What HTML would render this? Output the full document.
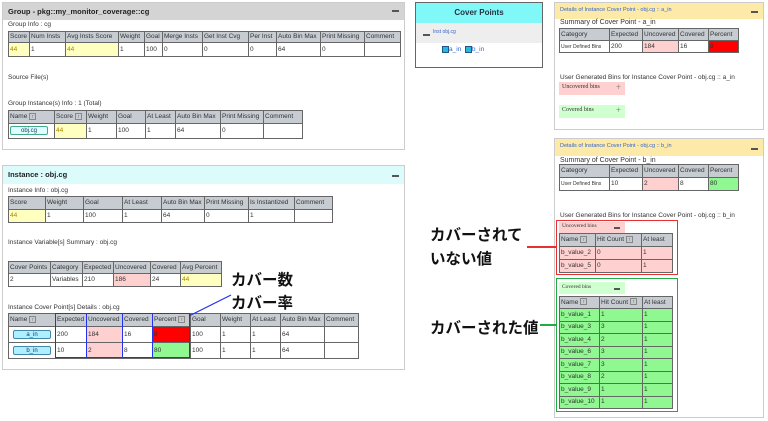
<!DOCTYPE html>
<html><head><meta charset="utf-8"><style>
*{margin:0;padding:0;box-sizing:border-box}
body{width:768px;height:421px;background:#fff;position:relative;overflow:hidden;font-family:"Liberation Sans","Noto Sans CJK JP",sans-serif;color:#333;font-size:7px}
.a{position:absolute}
.panel{position:absolute;border:1px solid #ccc;background:#fff}
.hd{position:absolute;left:0;right:0;top:0;font-weight:bold;font-size:7.5px;padding:4px 5px;color:#222}
.mn{position:absolute;right:5px;top:7px;width:7px;height:2px;background:#555}
table{position:absolute;border-collapse:collapse;table-layout:fixed;font-size:6.5px}
td{border:1px solid #666;padding:0 1px;white-space:nowrap;overflow:hidden;line-height:10px}
tr.h td{background:#c6ccd2;color:#333}
.y{background:#ffffc0;color:#aa8800}
.p{background:#ffd0d0}
.r{background:#f00}
.g{background:#90f890}
.btn{display:inline-block;width:38px;height:9px;border:1px solid #4a8;border-radius:2px;background:#dff;text-align:center;line-height:8px;font-size:6px;color:#236}
.btn2{display:inline-block;width:38px;height:9px;border:1px solid #48a;border-radius:2px;background:#aef0ff;text-align:center;line-height:8px;font-size:6px;color:#236}
.jp{position:absolute;font-weight:bold;font-size:15.5px;color:#111;font-family:"Liberation Sans","Noto Sans CJK JP",sans-serif}
.sm{position:absolute;font-size:6.5px;color:#333}
.so{display:inline-block;width:7px;height:7px;border:1px solid #888;font-size:5px;line-height:6px;text-align:center;vertical-align:middle;margin-left:2px}
.cb{display:inline-block;width:7px;height:7px;background:#2bd;border:1px solid #258;vertical-align:middle}
</style></head><body>

<div class="panel" style="left:2px;top:2px;width:403px;height:148px">
<div class="hd" style="background:#d4d4d4;height:17px">Group - pkg::my_monitor_coverage::cg</div><div class="mn"></div></div>
<div class="sm" style="left:8px;top:21px">Group Info : cg</div>
<table style="left:8px;top:31px;width:392px">
<colgroup><col style="width:21px"><col style="width:36px"><col style="width:53px"><col style="width:26px"><col style="width:18px"><col style="width:40px"><col style="width:46px"><col style="width:28px"><col style="width:44px"><col style="width:44px"><col style="width:36px"></colgroup>
<tr class="h"><td>Score</td><td>Num Insts</td><td>Avg Insts Score</td><td>Weight</td><td>Goal</td><td>Merge Insts</td><td>Get Inst Cvg</td><td>Per Inst</td><td>Auto Bin Max</td><td>Print Missing</td><td>Comment</td></tr>
<tr style="height:14px"><td class="y">44</td><td>1</td><td class="y">44</td><td>1</td><td>100</td><td>0</td><td>0</td><td>0</td><td>64</td><td>0</td><td></td></tr></table>
<div class="sm" style="left:8px;top:74px">Source File(s)</div>
<div class="sm" style="left:8px;top:100px">Group Instance(s) Info : 1 (Total)</div>
<table style="left:8px;top:110px;width:294px">
<colgroup><col style="width:46px"><col style="width:32px"><col style="width:30px"><col style="width:29px"><col style="width:30px"><col style="width:45px"><col style="width:43px"><col style="width:39px"></colgroup>
<tr class="h" style="height:13px"><td>Name<span class="so">↑</span></td><td>Score<span class="so">↑</span></td><td>Weight</td><td>Goal</td><td>At Least</td><td>Auto Bin Max</td><td>Print Missing</td><td>Comment</td></tr>
<tr style="height:15px"><td><span class="btn">obj.cg</span></td><td class="y">44</td><td>1</td><td>100</td><td>1</td><td>64</td><td>0</td><td></td></tr></table>

<div class="panel" style="left:2px;top:165px;width:403px;height:205px">
<div class="hd" style="background:#dcfcfc;height:18px">Instance : obj.cg</div><div class="mn" style="top:9px"></div></div>
<div class="sm" style="left:8px;top:187px">Instance Info : obj.cg</div>
<table style="left:8px;top:196px;width:324px">
<colgroup><col style="width:37px"><col style="width:38px"><col style="width:39px"><col style="width:39px"><col style="width:43px"><col style="width:44px"><col style="width:46px"><col style="width:38px"></colgroup>
<tr class="h" style="height:13px"><td>Score</td><td>Weight</td><td>Goal</td><td>At Least</td><td>Auto Bin Max</td><td>Print Missing</td><td>Is Instantized</td><td>Comment</td></tr>
<tr style="height:13px"><td class="y">44</td><td>1</td><td>100</td><td>1</td><td>64</td><td>0</td><td>1</td><td></td></tr></table>
<div class="sm" style="left:8px;top:239px">Instance Variable[s] Summary : obj.cg</div>
<table style="left:8px;top:261px;width:213px">
<colgroup><col style="width:42px"><col style="width:32px"><col style="width:31px"><col style="width:37px"><col style="width:30px"><col style="width:41px"></colgroup>
<tr class="h" style="height:12px"><td>Cover Points</td><td>Category</td><td>Expected</td><td>Uncovered</td><td>Covered</td><td>Avg Percent</td></tr>
<tr style="height:13px"><td>2</td><td>Variables</td><td>210</td><td class="p">186</td><td>24</td><td class="y">44</td></tr></table>
<div class="jp" style="left:231px;top:268px">カバー数</div>
<div class="jp" style="left:231px;top:291px">カバー率</div>
<div class="sm" style="left:8px;top:304px">Instance Cover Point[s] Details : obj.cg</div>
<table style="left:8px;top:313px;width:350px">
<colgroup><col style="width:47px"><col style="width:31px"><col style="width:36px"><col style="width:30px"><col style="width:38px"><col style="width:30px"><col style="width:30px"><col style="width:30px"><col style="width:44px"><col style="width:34px"></colgroup>
<tr class="h" style="height:13px"><td>Name<span class="so">↑</span></td><td>Expected</td><td>Uncovered</td><td>Covered</td><td>Percent<span class="so">↑</span></td><td>Goal</td><td>Weight</td><td>At Least</td><td>Auto Bin Max</td><td>Comment</td></tr>
<tr style="height:16px"><td style="text-align:center"><span class="btn2">a_in</span></td><td>200</td><td class="p">184</td><td>16</td><td class="r">8</td><td>100</td><td>1</td><td>1</td><td>64</td><td></td></tr>
<tr style="height:16px"><td style="text-align:center"><span class="btn2">b_in</span></td><td>10</td><td class="p">2</td><td>8</td><td class="g">80</td><td>100</td><td>1</td><td>1</td><td>64</td><td></td></tr></table>
<div class="a" style="left:55px;top:313px;width:135px;height:45px;border:1.5px solid #2233ee"></div>
<div class="a" style="left:86px;top:313px;width:1px;height:45px;background:#2233ee"></div>
<div class="a" style="left:122px;top:313px;width:1px;height:45px;background:#2233ee"></div>
<div class="a" style="left:152px;top:313px;width:1px;height:45px;background:#2233ee"></div>
<svg class="a" style="left:185px;top:290px" width="50" height="30"><line x1="4" y1="26" x2="46" y2="5" stroke="#2233ee" stroke-width="1.2"/></svg>

<div class="a" style="left:415px;top:2px;width:128px;height:66px;border:1px solid #666;background:#fff">
<div class="a" style="left:0;top:0;width:126px;height:20px;background:#80f8f8;font-weight:bold;font-size:8px;text-align:center;line-height:20px;color:#234">Cover Points</div>
<div class="a" style="left:0;top:20px;width:126px;height:20px;background:#eee"></div>
<div class="a" style="left:7px;top:31px;width:7px;height:1.5px;background:#555"></div>
<div class="sm" style="left:17px;top:26px;font-size:5px;color:#36c">Inst obj.cg</div>
<div class="sm" style="left:26px;top:43px;color:#36c;font-size:6.5px"><span class="cb"></span>a_in &nbsp;<span class="cb"></span>b_in</div>
</div>

<div class="panel" style="left:554px;top:2px;width:210px;height:128px">
<div class="hd" style="background:#fde9a8;height:16px;font-weight:normal;font-size:5.5px;color:#36c">Details of Instance Cover Point - obj.cg :: a_in</div><div class="mn" style="top:8px"></div></div>
<div class="sm" style="left:560px;top:19px;font-size:7px">Summary of Cover Point - a_in</div>
<table style="left:559px;top:28px;width:179px">
<colgroup><col style="width:50px"><col style="width:33px"><col style="width:36px"><col style="width:30px"><col style="width:30px"></colgroup>
<tr class="h" style="height:12px"><td>Category</td><td>Expected</td><td>Uncovered</td><td>Covered</td><td>Percent</td></tr>
<tr style="height:12px"><td style="font-size:5px">User Defined Bins</td><td>200</td><td class="p">184</td><td>16</td><td class="r">8</td></tr></table>
<div class="sm" style="left:560px;top:74px">User Generated Bins for Instance Cover Point - obj.cg :: a_in</div>
<div class="a" style="left:559px;top:82px;width:66px;height:13px;background:#ffd0d0;font-family:'Liberation Serif',serif;font-size:6px;padding:2px 3px">Uncovered bins<span style="position:absolute;right:4px;color:#777;font-size:9px;top:0">+</span></div>
<div class="a" style="left:559px;top:105px;width:66px;height:13px;background:#d0ffd0;font-family:'Liberation Serif',serif;font-size:6px;padding:2px 3px">Covered bins<span style="position:absolute;right:4px;color:#777;font-size:9px;top:0">+</span></div>

<div class="panel" style="left:554px;top:138px;width:210px;height:280px">
<div class="hd" style="background:#fde9a8;height:17px;font-weight:normal;font-size:5.5px;color:#36c">Details of Instance Cover Point - obj.cg :: b_in</div><div class="mn" style="top:9px"></div></div>
<div class="sm" style="left:560px;top:157px;font-size:7px">Summary of Cover Point - b_in</div>
<table style="left:559px;top:164px;width:179px">
<colgroup><col style="width:50px"><col style="width:33px"><col style="width:36px"><col style="width:30px"><col style="width:30px"></colgroup>
<tr class="h" style="height:13px"><td>Category</td><td>Expected</td><td>Uncovered</td><td>Covered</td><td>Percent</td></tr>
<tr style="height:13px"><td style="font-size:5px">User Defined Bins</td><td>10</td><td class="p">2</td><td>8</td><td class="g">80</td></tr></table>
<div class="sm" style="left:560px;top:212px">User Generated Bins for Instance Cover Point - obj.cg :: b_in</div>
<div class="a" style="left:556px;top:220px;width:122px;height:55px;border:1.5px solid #e83030"></div>
<div class="a" style="left:559px;top:222px;width:66px;height:11px;background:#ffd0d0;font-family:'Liberation Serif',serif;font-size:5.5px;padding:1px 3px">Uncovered bins<span style="position:absolute;right:5px;top:5px;width:6px;height:1.5px;background:#555"></span></div>
<table style="left:559px;top:233px;width:113px">
<colgroup><col style="width:36px"><col style="width:46px"><col style="width:31px"></colgroup>
<tr class="h" style="height:13px"><td>Name<span class="so">↑</span></td><td>Hit Count<span class="so">↑</span></td><td>At least</td></tr>
<tr style="height:13px"><td class="p">b_value_2</td><td class="p">0</td><td class="p">1</td></tr>
<tr style="height:13px"><td class="p">b_value_5</td><td class="p">0</td><td class="p">1</td></tr></table>
<div class="a" style="left:556px;top:278px;width:122px;height:134px;border:1.5px solid #22aa44"></div>
<div class="a" style="left:559px;top:282px;width:66px;height:12px;background:#d0ffd0;font-family:'Liberation Serif',serif;font-size:5.5px;padding:2px 3px">Covered bins<span style="position:absolute;right:5px;top:6px;width:6px;height:1.5px;background:#555"></span></div>
<table style="left:559px;top:296px;width:113px">
<colgroup><col style="width:40px"><col style="width:43px"><col style="width:30px"></colgroup>
<tr class="h" style="height:12px"><td>Name<span class="so">↑</span></td><td>Hit Count<span class="so">↑</span></td><td>At least</td></tr>
<tr style="height:12.5px"><td class="g">b_value_1</td><td class="g">1</td><td class="g">1</td></tr>
<tr style="height:12.5px"><td class="g">b_value_3</td><td class="g">3</td><td class="g">1</td></tr>
<tr style="height:12.5px"><td class="g">b_value_4</td><td class="g">2</td><td class="g">1</td></tr>
<tr style="height:12.5px"><td class="g">b_value_6</td><td class="g">3</td><td class="g">1</td></tr>
<tr style="height:12.5px"><td class="g">b_value_7</td><td class="g">3</td><td class="g">1</td></tr>
<tr style="height:12.5px"><td class="g">b_value_8</td><td class="g">2</td><td class="g">1</td></tr>
<tr style="height:12.5px"><td class="g">b_value_9</td><td class="g">1</td><td class="g">1</td></tr>
<tr style="height:12.5px"><td class="g">b_value_10</td><td class="g">1</td><td class="g">1</td></tr></table>

<div class="jp" style="left:430px;top:223px">カバーされて</div>
<div class="jp" style="left:430px;top:247px">いない値</div>
<div class="a" style="left:527px;top:246px;width:29px;height:1.5px;background:#e83030"></div>
<div class="jp" style="left:430px;top:316px">カバーされた値</div>
<div class="a" style="left:540px;top:324px;width:16px;height:1.5px;background:#22aa44"></div>
</body></html>
